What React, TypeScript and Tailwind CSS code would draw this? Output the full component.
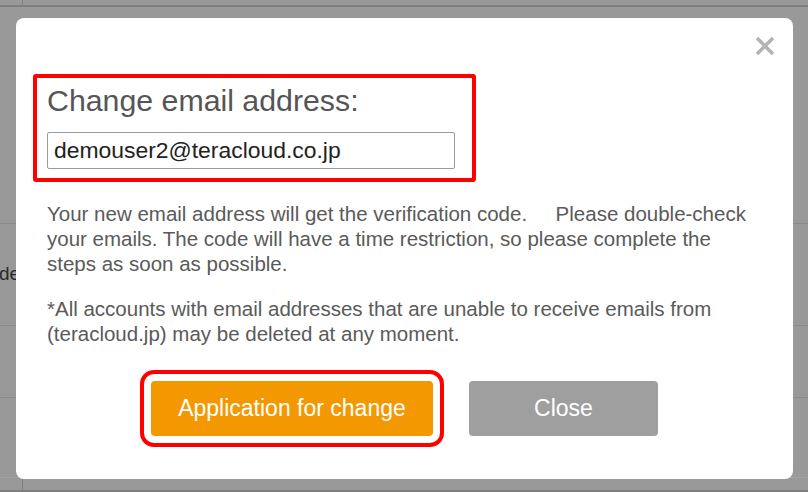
import React from 'react';

// ================================
// Background page (dimmed behind overlay)
// ================================

const BackgroundPage: React.FC = () => (
  <div className="flex h-full flex-col">
    <div className="flex h-[7px] border-b-2 border-[#7f7f7f]">
      <div className="w-[23px] border-r border-[#7f7f7f]" />
    </div>
    <div className="h-[217px] border-b border-[#8a8a8a]" />
    <div className="flex h-[102px] items-center border-b border-[#8a8a8a]">
      <span className="-ml-[1px] text-[19px] text-[#2a2a2a]">de</span>
    </div>
    <div className="h-[72px] border-b border-[#8a8a8a]" />
    <div className="h-[80px] border-b border-[#a3a3a3]" />
    <div className="flex flex-1 border-b-2 border-[#7f7f7f]">
      <div className="w-[23px] border-r border-[#7f7f7f]" />
    </div>
  </div>
);

// ================================
// Change Email Modal
// ================================

const ChangeEmailModal: React.FC = () => (
  <div className="absolute left-[16px] top-[18px] flex h-[461px] w-[777px] flex-col rounded-[8px] bg-white pb-[32px] pl-[17px] pt-[56px]">
    {/* Close icon */}
    <button className="absolute right-[18px] top-[18px] h-[20px] w-[20px]" aria-label="close">
      <svg viewBox="0 0 20 20" className="h-[20px] w-[20px]">
        <path d="M2 2 L18 18 M18 2 L2 18" stroke="#b3b3b3" strokeWidth="3.5" strokeLinecap="butt" />
      </svg>
    </button>

    {/* Highlighted email field */}
    <div className="self-start rounded-[3px] border-4 border-[#ff0000] pb-[9px] pl-[10px] pr-[17px] pt-[5px]">
      <h2 className="text-[30.3px] leading-[36px] text-[#555555]">Change email address:</h2>
      <input
        className="mt-[13px] block h-[37px] w-[408px] rounded-[2px] border border-[#9a9a9a] px-[6px] text-[22.9px] text-[#222222] outline-none"
        defaultValue="demouser2@teracloud.co.jp"
      />
    </div>

    {/* Notes */}
    <p className="ml-[14px] mt-[19px] w-[716px] text-[20.5px] leading-[25px] text-[#5a5a5a]">
      Your new email address will get the verification code.{'\u00a0\u00a0\u00a0\u00a0'} Please double-check your
      emails. The code will have a time restriction, so please complete the steps as soon as possible.
    </p>
    <p className="ml-[14px] mt-[20px] w-[716px] text-[20.5px] leading-[25px] text-[#5a5a5a]">
      *All accounts with email addresses that are unable to receive emails from (teracloud.jp) may be deleted at any
      moment.
    </p>

    {/* Actions */}
    <div className="ml-[107px] mt-auto flex items-center gap-[25px]">
      <div className="rounded-[14px] border-4 border-[#ff0000] p-[7px]">
        <button className="h-[55px] w-[282px] rounded-[4px] bg-[#f39800] text-[23px] text-white">
          Application for change
        </button>
      </div>
      <button className="h-[55px] w-[189px] rounded-[4px] bg-[#9f9f9f] text-[23px] text-white">Close</button>
    </div>
  </div>
);

export default function App() {
  return (
    <div className="relative h-[492px] w-[808px] overflow-hidden bg-[#999999] font-['Liberation_Sans',Arial,sans-serif]">
      <BackgroundPage />
      <ChangeEmailModal />
    </div>
  );
}
